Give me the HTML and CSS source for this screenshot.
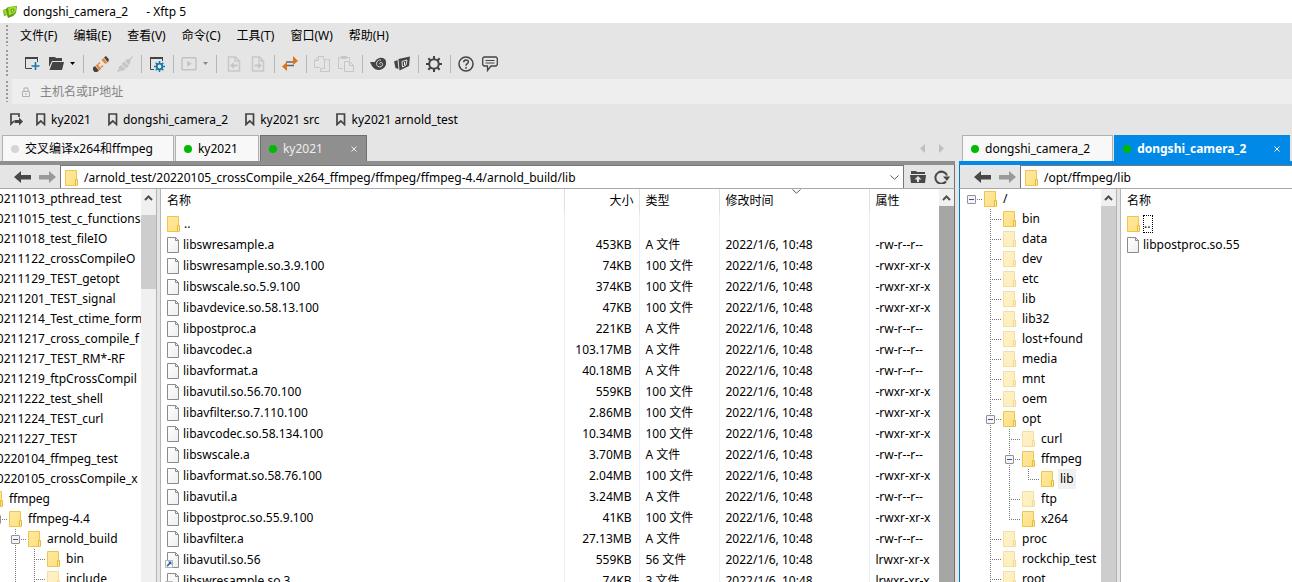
FILE: index.html
```html
<!DOCTYPE html>
<html lang="zh-CN">
<head>
<meta charset="utf-8">
<title>dongshi_camera_2 - Xftp 5</title>
<link rel="stylesheet" href="styles.css">
</head>
<body>
<svg class="defs" aria-hidden="true">
  <defs>
    <linearGradient id="folder-fill" x1="0" y1="0" x2="1" y2="1"><stop offset="0" stop-color="#ffe9a2"/><stop offset="1" stop-color="#ffdf7e"/></linearGradient>
    <linearGradient id="page-fill" x1="0" y1="0" x2="1" y2="1"><stop offset="0" stop-color="#fff"/><stop offset="1" stop-color="#eceef1"/></linearGradient>
  </defs>
  <symbol id="folder" viewBox="0 0 13 16"><path d="M.5.5h11v10.500h1v4.500H.5z" fill="url(#folder-fill)" stroke="#ebc750"/><path d="M10.500 15V9.500h2V15" fill="#ffe9a2" stroke="#e3bb3c"/></symbol>
  <symbol id="page" viewBox="0 0 12 16"><path d="M.5.5h8l3 3v12H.5z" fill="url(#page-fill)" stroke="#8b8b8b"/><path d="M8.500.5v3h3" fill="none" stroke="#8b8b8b"/></symbol>
  <symbol id="shortcut" viewBox="0 0 8 8"><path d="M.5.5h7v7h-7z" fill="#fff" stroke="#b5b5b5"/><path d="M3 1.500h3.500V5L5.300 3.900 2.500 6.700 1.500 5.500 4.200 2.800z" fill="#2360b5"/></symbol>
  <symbol id="back" viewBox="0 0 17 12"><path d="M0 6 7 0v4h10v4.500H7V12z"/></symbol>
  <symbol id="forward" viewBox="0 0 17 12"><path d="M17 6 10 0v4H0v4.500h10V12z"/></symbol>
  <symbol id="chevron-down" viewBox="0 0 9 5"><path d="M.5.5l4 3.700 4-3.700" fill="none" stroke="currentColor"/></symbol>
  <symbol id="chevron-up" viewBox="0 0 9 6"><path d="M1 5l3.500-3.500L8 5" fill="none" stroke="currentColor" stroke-width="2"/></symbol>
  <symbol id="close" viewBox="0 0 6 6"><path d="M.5.5l5 5M5.500.5l-5 5" stroke="currentColor"/></symbol>
  <symbol id="bookmark" viewBox="0 0 10 13"><path d="M1 1h7.500v10.500L4.800 8 1 11.500z" fill="none" stroke="currentColor" stroke-width="1.700"/></symbol>
</svg>

<header class="titlebar">
  <svg class="logo" viewBox="0 0 14 12"><path d="M0 4 3 3 5 1 14 0 13 7 10 10 5 12 4 9 1 10z" fill="#5a9b12"/><path d="M0 4 3 3.500 4.500 8.500 1.500 9z" fill="#9ad21f"/><path d="M5 1.500 13.500.5 12.300 6.500 6 9.500z" fill="#a6dc2d"/><path d="M8 3.500 11 3 10.500 5.500 8.300 6.300z" fill="#c9ee70" stroke="#4e8f10" stroke-width=".8"/></svg>
  <h1>dongshi_camera_2</h1><span>- Xftp 5</span>
</header>

<nav class="menu grip">
  <button>文件(F)</button><button>编辑(E)</button><button>查看(V)</button><button>命令(C)</button><button>工具(T)</button><button>窗口(W)</button><button>帮助(H)</button>
</nav>

<div class="toolbar grip">
  <button aria-label="新建"><svg viewBox="0 0 16 16"><path d="M8 12.500H1.500V2h12v4" fill="none" stroke="#444"/><path d="M1 1h13v2H1z"/><path d="M11.500 6v8M7.500 10h8" stroke="#1479a8" stroke-width="1.600"/></svg></button>
  <button aria-label="打开"><svg viewBox="0 0 16 16"><path d="M1 1h6l1 1h6v3H4L1 11z"/><path d="M4.500 6H16l-2 8H1.500z"/></svg></button>
  <button class="caret" aria-label="打开列表"><svg viewBox="0 0 5 3"><path d="M0 0h5L2.500 3z" fill="#000"/></svg></button>
  <i class="sep wide"></i>
  <button aria-label="连接"><svg viewBox="0 0 16 16"><path d="M11 1.500 13 0l3 3.500-1 3z"/><path d="M0 11.500 2 10l4 4.500L4 16H1.500L0 14z"/><path d="M8.500 4 10.500 2 14.300 6.700 12.300 8z" fill="#e8842c"/><path d="M2.700 9.500 4.300 8l4 4.800-1.800 1.500z" fill="#e8842c"/><path d="M5 8.500 7 6.500M8 11.500l2-2" stroke="#e8842c" stroke-width="1.200"/></svg></button>
  <button aria-label="断开" disabled><svg viewBox="0 0 16 16"><path d="M0 15l2-2-.5-2L4 9l4.500 4L6 15l-2-.5L1 16zM4.500 8 7 5.500l5 4.300L9 12.500zM8 5l2-2 2.500.2L15 0l1 1-2.700 3 .2 2-1.500 3z"/></svg></button>
  <i class="sep"></i>
  <button aria-label="属性"><svg viewBox="0 0 16 16"><path d="M5 13.500H1.500V2h12v3" fill="none" stroke="#444"/><path d="M1 1h13v2H1z"/><circle cx="10.500" cy="10.500" r="2.800" fill="none" stroke="#1479a8" stroke-width="1.800"/><path d="M10.500 5v3m0 5v3M5 10.500h3m5 0h3M6.700 6.700l1.800 1.800m4 4 1.800 1.800m0-7.600-1.800 1.800m-4 4-1.800 1.800" stroke="#1479a8" stroke-width="1.500"/></svg></button>
  <i class="sep"></i>
  <button aria-label="执行" disabled><svg viewBox="0 0 16 16"><rect x="1" y="1.700" width="14" height="12" rx="1" fill="none" stroke="#c3c3c3" stroke-width="1.500"/><path d="M6 4.700l5 3-5 3z"/></svg></button>
  <button class="caret" aria-label="执行列表"><svg viewBox="0 0 5 3"><path d="M0 0h5L2.500 3z" fill="#888"/></svg></button>
  <i class="sep wide"></i>
  <button aria-label="下载" disabled><svg viewBox="0 0 16 16"><path d="M2.500 1h7l4 4v10h-11zM9 1v4h4" fill="none" stroke="#c8c8c8" stroke-width="1.500"/><path d="M4 9.500 8 6v2.500h3.500v2H8V13z"/></svg></button>
  <button aria-label="上传" disabled><svg viewBox="0 0 16 16"><path d="M2.500 1h7l4 4v10h-11zM9 1v4h4" fill="none" stroke="#c8c8c8" stroke-width="1.500"/><path d="M12 9.500 8 6v2.500H4.500v2H8V13z"/></svg></button>
  <i class="sep"></i>
  <button aria-label="同步"><svg viewBox="0 0 16 16"><path d="M4 6h8M4 9.500h8" stroke="#666" stroke-width="1.500"/><path d="M11 0l5 5-5 4z" fill="#df7416"/><path d="M5 6 0 10.500 5 15z" fill="#df7416"/></svg></button>
  <i class="sep"></i>
  <button aria-label="复制" disabled><svg viewBox="0 0 16 16"><path d="M5.500 11.500h-5v-7l4-4h5v3M4.500.5v4h-4M13.500 3.500h2v12h-9v-3M13.500 3.500h-3v9h-4" fill="none" stroke="#c6c6c6"/></svg></button>
  <button aria-label="粘贴" disabled><svg viewBox="0 0 16 16"><path d="M5 12.500H.5v-11h11v3M3.500.5h5v2h-5zM6.500 5.500h5l4 4v6h-9zM11.500 5.500v4h4" fill="none" stroke="#c6c6c6"/></svg></button>
  <i class="sep"></i>
  <button aria-label="Xshell"><svg viewBox="0 0 16 16"><path d="M0 6l5 0c1-4 8-6 10.500-2 2 5-1 9.500-6.500 10-4 .3-7-3-9-8z"/><path d="M10.500 8.500c-2-1 0-3 1.500-1.500 2 2-1 5-4 3.500C5 8 7 3.500 11 4" fill="none" stroke="#ddd"/></svg></button>
  <button aria-label="Xftp"><svg viewBox="0 0 16 16"><path d="M0 5.500 3.500 4 4.500 13 1.500 12z"/><path d="M4.500 3 16 .5 15 10 5.500 14.500z"/><path d="M8 5.500 13 4 12 9 8.500 11z" fill="none" stroke="#e5e5e5"/><path d="M10.500 6v3" stroke="#eee"/></svg></button>
  <i class="sep"></i>
  <button aria-label="选项"><svg viewBox="0 0 16 16"><circle cx="8" cy="8" r="4.800" fill="none" stroke="#444" stroke-width="2"/><path d="M8 0v3m0 10v3M0 8h3m10 0h3M2.300 2.300l2.200 2.200m7 7 2.200 2.200m0-11.400-2.200 2.200m-7 7-2.200 2.200" stroke="#444" stroke-width="2"/></svg></button>
  <i class="sep"></i>
  <button aria-label="帮助"><svg viewBox="0 0 16 16"><circle cx="8" cy="8" r="7" fill="none" stroke="#444" stroke-width="1.500"/><path d="M5.700 6.300C5.700 3 10.500 3.300 10.400 6 10.300 7.600 8 7.800 8 9.800M8 11v1.800" fill="none" stroke="#444" stroke-width="1.500"/></svg></button>
  <button aria-label="反馈"><svg viewBox="0 0 16 16"><path d="M2 1h12l1.300 1.300v6.400L14 10H9l-3.500 4.500V10H2L.7 8.700V2.300z" fill="none" stroke="#444" stroke-width="1.300"/><path d="M3.500 4.500h9M3.500 7h9" stroke="#444"/></svg></button>
</div>

<div class="hostbar grip">
  <label class="host">
    <svg class="lock" viewBox="0 0 8 10"><path d="M2 4V1h4v3M.5 4.500h7v5h-7zM4 6v2" fill="none" stroke="#b0b0b0"/></svg>
    <input type="text" placeholder="主机名或IP地址" aria-label="主机名或IP地址">
  </label>
</div>

<div class="bookmarks">
  <button aria-label="添加书签"><svg class="mark-add" viewBox="0 0 13 13"><path d="M9 4V1H1v10l3-3" fill="none" stroke="currentColor" stroke-width="1.700"/><path d="M4.500 7H9V4.500l4 4L9 12.500V10H4.500z" fill="currentColor"/></svg></button>
  <button class="saved"><svg class="mark"><use href="#bookmark"/></svg>ky2021</button>
  <button class="saved"><svg class="mark"><use href="#bookmark"/></svg>dongshi_camera_2</button>
  <button class="saved"><svg class="mark"><use href="#bookmark"/></svg>ky2021 src</button>
  <button class="saved"><svg class="mark"><use href="#bookmark"/></svg>ky2021 arnold_test</button>
</div>

<main class="panes">
  <section class="pane local">
    <div class="tabs">
      <button class="tab"><i class="dot idle"></i>交叉编译x264和ffmpeg</button>
      <button class="tab"><i class="dot"></i>ky2021</button>
      <div class="tab active"><i class="dot"></i>ky2021<button class="close" aria-label="关闭"><svg><use href="#close"/></svg></button></div>
      <div class="tab-scroll"><button aria-label="向左"><svg viewBox="0 0 5 9"><path d="M5 0v9L0 4.500z"/></svg></button><button aria-label="向右"><svg viewBox="0 0 5 9"><path d="M0 0v9l5-4.500z"/></svg></button></div>
    </div>
    <div class="location">
      <button class="go" aria-label="后退"><svg><use href="#back"/></svg></button>
      <button class="go dim" aria-label="前进"><svg><use href="#forward"/></svg></button>
      <div class="path">
        <svg class="folder"><use href="#folder"/></svg>
        <input type="text" aria-label="路径" value="/arnold_test/20220105_crossCompile_x264_ffmpeg/ffmpeg/ffmpeg-4.4/arnold_build/lib">
        <button aria-label="展开"><svg class="chev"><use href="#chevron-down"/></svg></button>
      </div>
      <button class="act" aria-label="上级目录"><svg viewBox="0 0 16 14"><path d="M1 1h5l1 1h8v2H1zM0 5h16l-1 8H1z"/><path d="M8 6l3.500 3.500H9V12H7V9.500H4.500z" fill="#e5e5e5"/></svg></button>
      <button class="act" aria-label="刷新"><svg viewBox="0 0 16 14"><path d="M12 11.500A6 6 0 1 1 13 5.500" fill="none" stroke="#484848" stroke-width="2"/><path d="M9 6.500h7L13 11z"/></svg></button>
    </div>
    <div class="content">
      <div class="tree"><ul class="rows scrolled" id="tree-left"></ul></div>
      <div class="scrollbar"><button aria-label="向上"><svg><use href="#chevron-up"/></svg></button><i class="thumb short"></i></div>
      <i class="splitter"></i>
      <div class="list">
        <table>
          <colgroup><col><col class="c-size"><col class="c-type"><col class="c-time"><col class="c-attr"></colgroup>
          <thead><tr><th>名称</th><th class="num">大小</th><th>类型</th><th class="sorted">修改时间<svg class="chev"><use href="#chevron-down"/></svg></th><th>属性</th></tr></thead>
          <tbody id="files-left"></tbody>
        </table>
      </div>
      <div class="scrollbar dark"><button aria-label="向上"><svg><use href="#chevron-up"/></svg></button><i class="thumb"></i></div>
    </div>
  </section>

  <section class="pane current">
    <div class="tabs">
      <button class="tab"><i class="dot"></i>dongshi_camera_2</button>
      <div class="tab active"><i class="dot"></i>dongshi_camera_2<button class="close" aria-label="关闭"><svg><use href="#close"/></svg></button></div>
    </div>
    <div class="location">
      <button class="go" aria-label="后退"><svg><use href="#back"/></svg></button>
      <button class="go dim" aria-label="前进"><svg><use href="#forward"/></svg></button>
      <div class="path">
        <svg class="folder"><use href="#folder"/></svg>
        <input type="text" aria-label="路径" value="/opt/ffmpeg/lib">
      </div>
    </div>
    <div class="content">
      <div class="tree"><ul class="rows" id="tree-right"></ul></div>
      <div class="scrollbar"><button aria-label="向上"><svg><use href="#chevron-up"/></svg></button><i class="thumb"></i></div>
      <i class="splitter"></i>
      <div class="list">
        <table>
          <thead><tr><th>名称</th></tr></thead>
          <tbody id="files-right"></tbody>
        </table>
      </div>
    </div>
  </section>
</main>
<script src="app.js"></script>
</body>
</html>
```

FILE: styles.css
```css
* { box-sizing: border-box; }

body {
  display: flex;
  flex-direction: column;
  height: 100vh;
  margin: 0;
  overflow: hidden;
  background: #e5e5e5;
  color: #000;
  font: 12px/20px "Noto Sans", "Noto Sans CJK SC", sans-serif;
}

button, input { border: 0; padding: 0; background: none; color: inherit; font: inherit; outline: 0; }
svg { display: block; flex: none; }
ul { list-style: none; margin: 0; padding: 0; }
.defs { position: absolute; width: 0; height: 0; }

.titlebar { display: flex; align-items: center; flex: none; height: 23px; padding-left: 3px; background: #fff; }
.titlebar h1 { margin: 0 18px 0 6px; font: inherit; }
.logo { width: 14px; height: 12px; }

.grip { position: relative; padding-left: 20px; }
.grip::before {
  content: "";
  position: absolute;
  left: 6px;
  top: 2px;
  bottom: 2px;
  width: 2px;
  background: repeating-linear-gradient(#999 0 2px, transparent 2px 4px);
}

.menu { display: flex; align-items: center; gap: 16px; flex: none; height: 25px; }

.toolbar { display: flex; align-items: center; flex: none; height: 31px; fill: #444; }
.toolbar button { width: 24px; height: 24px; padding: 4px; }
.toolbar button:disabled { fill: #c6c6c6; }
.toolbar button > svg { width: 16px; height: 16px; }
.toolbar .caret { width: 9px; padding: 2px; }
.toolbar .caret > svg { width: 5px; height: 3px; }
.sep { width: 8px; height: 18px; background: linear-gradient(#b5b5b5, #b5b5b5) center / 1px 100% no-repeat; }
.sep.wide { width: 12px; }

.hostbar { flex: none; height: 25px; padding-left: 12px; }
.host { display: flex; align-items: center; height: 25px; padding-left: 10px; background: #eee; }
.lock { width: 8px; height: 10px; margin-right: 10px; }
.host input { flex: 1; }
.host input::placeholder { color: #858585; opacity: 1; }

.bookmarks { display: flex; align-items: center; gap: 13px; flex: none; height: 31px; padding-left: 10px; }
.bookmarks button { display: flex; align-items: center; gap: 5px; }
.bookmarks .saved { padding-right: 4px; }
.mark { width: 10px; height: 13px; color: #444; }
.mark-add { width: 13px; height: 13px; color: #444; }

.panes { display: grid; grid-template-columns: minmax(0, 1fr) 333px; gap: 4px; flex: 1; min-height: 0; }
.pane { --accent: #8f8f8f; --edge: #707070; display: flex; flex-direction: column; min-width: 0; min-height: 0; }
.current { --accent: #0089e6; --edge: #0078cc; }

.tabs { display: flex; flex: none; gap: 1px; height: 30px; padding-left: 2px; border-bottom: 4px solid var(--accent); }
.current .tabs { padding-left: 3px; }
.tab {
  display: flex;
  align-items: center;
  gap: 6px;
  height: 26px;
  padding: 1px 20px 0 8px;
  border: 1px solid #b0b0b0;
  border-bottom: 0;
  background: #f8f8f8;
}
.current .tab { padding-right: 22px; }
.tab.active { border-color: var(--edge); background: var(--accent); color: #eee; }
.pane .tab.active { padding-right: 8px; }
.current .tab.active { border-color: var(--accent); color: #fff; font-weight: bold; }
.dot { width: 8px; height: 8px; border-radius: 50%; background: #0b0; }
.dot.idle { background: #d5d5d5; }
.close { width: 8px; margin-left: 21px; padding: 1px; }
.close svg { width: 6px; height: 6px; }
.tab-scroll { display: flex; gap: 14px; margin: 0 11px 0 auto; fill: #c0c0c0; }
.tab-scroll svg { width: 5px; height: 9px; }

.location { display: flex; align-items: center; flex: none; height: 24px; padding-left: 10px; border-bottom: 1px solid #a8a8a8; }
.current .location, .current .content { border-left: 1px solid #0078cc; }
.local .location, .local .content { border-right: 1px solid #707070; }
.go { padding: 0 4px; fill: #484848; }
.go.dim { fill: #999; }
.go svg { width: 17px; height: 12px; }
.path { display: flex; align-items: center; flex: 1; align-self: stretch; margin-right: 2px; padding: 1px 4px 0; border: 1px solid #777; border-bottom: 0; background: #fff; }
.current .path { margin-right: 0; border-right: 0; }
.path input { flex: 1; min-width: 0; padding: 0 6px; }
.chev { width: 9px; height: 5px; color: #555; }
.act { padding: 0 4px; fill: #484848; }
.act svg { width: 16px; height: 14px; }

.content { display: flex; flex: 1; min-height: 0; background: #fff; }
.tree { flex: none; width: 141px; overflow: hidden; }
.rows { padding-left: 2px; }
.rows.scrolled { margin-left: -53px; }
.rows li { display: flex; align-items: center; height: 20px; white-space: nowrap; }
.folder { width: 13px; height: 16px; }
.faint { opacity: .55; }
.rows .folder { margin: 0 4px 0 3px; }
.rows span { padding: 0 2px; }
.rows .selected { background: #f0f0f0; }

.cell { position: relative; flex: none; width: 19px; height: 20px; }
.v::before, .t::before, .l::before, .b::before {
  content: "";
  position: absolute;
  left: 9px;
  top: 0;
  width: 1px;
  height: 20px;
  background: repeating-linear-gradient(#777 0 1px, transparent 1px 2px);
}
.l::before, .e::before { height: 10px; }
.t::after, .l::after, .b::after, .r::after {
  content: "";
  position: absolute;
  left: 9px;
  top: 10px;
  width: 12px;
  height: 1px;
  background: repeating-linear-gradient(90deg, #777 0 1px, transparent 1px 2px);
}
.toggle { position: absolute; z-index: 1; left: 5px; top: 6px; width: 9px; height: 9px; border: 1px solid #919191; border-radius: 1px; background: linear-gradient(#35559f, #35559f) center / 5px 1px no-repeat #f5f5f5; }

.scrollbar { display: flex; flex-direction: column; flex: none; width: 15px; background: #f0f0f0; color: #505050; }
.scrollbar button { flex: none; height: 17px; padding: 5px 3px; }
.scrollbar svg { width: 9px; height: 6px; }
.thumb { flex: 1; background: #cdcdcd; }
.thumb.short { flex: none; height: 74px; margin-top: 9px; }
.dark .thumb { background: #a6a6a6; }
.splitter { flex: none; width: 5px; border: solid #b5b5b5; border-width: 0 1px; background: #e5e5e5; }

.list { flex: 1; min-width: 0; overflow: hidden; }
table { width: 100%; border-collapse: collapse; table-layout: fixed; }
.c-size { width: 75px; }
.c-type { width: 80px; }
.c-time { width: 150px; }
.c-attr { width: 70px; }
th, td { height: 21px; padding: 0 0 0 6px; border-left: 1px solid #e9f0f8; text-align: left; font-weight: normal; line-height: 20px; white-space: nowrap; }
th { height: 24px; border-color: #e0e0e0; }
th:first-child, td:first-child { border-left: 0; }
th.num { padding-right: 5px; text-align: right; }
td.num { padding-right: 7px; text-align: right; }
.sorted { position: relative; }
.sorted .chev { position: absolute; left: 72px; top: 0; }
.name { display: flex; align-items: center; gap: 4px; height: 21px; }
.icon { position: relative; }
.page { width: 12px; height: 16px; }
.shortcut { position: absolute; left: -2px; bottom: 0; width: 8px; height: 8px; }
.focused { padding-right: 2px; outline: 1px dotted #000; line-height: 16px; }
```

FILE: app.js
```js
// Tree rows: [guide cells, label, folder state]. Cells: t tee, l elbow, v line, b toggle, e last toggle, r root toggle.
const leftTree = [
  ["t", "20211013_pthread_test"], ["t", "20211015_test_c_functions"], ["t", "20211018_test_fileIO"],
  ["t", "20211122_crossCompileO"], ["t", "20211129_TEST_getopt"], ["t", "20211201_TEST_signal"],
  ["t", "20211214_Test_ctime_form"], ["t", "20211217_cross_compile_f"], ["t", "20211217_TEST_RM*-RF"],
  ["t", "20211219_ftpCrossCompil"], ["t", "20211222_test_shell"], ["t", "20211224_TEST_curl"],
  ["t", "20211227_TEST"], ["t", "20220104_ffmpeg_test"], ["b", "20220105_crossCompile_x"],
  ["vb", "ffmpeg"], ["v.e", "ffmpeg-4.4"], ["v..b", "arnold_build"], ["v..vt", "bin"], ["v..vt", "include", "faint"],
];
const rightTree = [
  ["r", "/"], [".t", "bin"], [".t", "data", "faint"], [".t", "dev", "faint"], [".t", "etc", "faint"],
  [".t", "lib", "faint"], [".t", "lib32", "faint"], [".t", "lost+found", "faint"], [".t", "media", "faint"],
  [".t", "mnt", "faint"], [".t", "oem", "faint"], [".b", "opt"], [".vt", "curl", "faint"], [".vb", "ffmpeg"],
  [".vvl", "lib", "selected"], [".vt", "ftp", "faint"], [".vl", "x264"], [".t", "proc", "faint"],
  [".t", "rockchip_test", "faint"], [".t", "root", "faint"],
];
const cellClass = { e: "b e", ".": "" };

function renderTree(id, rows) {
  document.getElementById(id).innerHTML = rows.map(([cells, label, state = ""]) => {
    const guides = [...cells].map(c =>
      `<i class="cell ${cellClass[c] ?? c}">${"ber".includes(c) ? '<button class="toggle" aria-label="折叠"></button>' : ""}</i>`).join("");
    return `<li>${guides}<svg class="folder ${state === "faint" ? "faint" : ""}"><use href="#folder"/></svg><span class="${state === "selected" ? "selected" : ""}">${label}</span></li>`;
  }).join("");
}

const RW = "-rw-r--r--", RX = "-rwxr-xr-x", LINK = "lrwxr-xr-x", TIME = "2022/1/6, 10:48";
const files = [
  ["libswresample.a", "453KB", "A 文件", RW], ["libswresample.so.3.9.100", "74KB", "100 文件", RX],
  ["libswscale.so.5.9.100", "374KB", "100 文件", RX], ["libavdevice.so.58.13.100", "47KB", "100 文件", RX],
  ["libpostproc.a", "221KB", "A 文件", RW], ["libavcodec.a", "103.17MB", "A 文件", RW],
  ["libavformat.a", "40.18MB", "A 文件", RW], ["libavutil.so.56.70.100", "559KB", "100 文件", RX],
  ["libavfilter.so.7.110.100", "2.86MB", "100 文件", RX], ["libavcodec.so.58.134.100", "10.34MB", "100 文件", RX],
  ["libswscale.a", "3.70MB", "A 文件", RW], ["libavformat.so.58.76.100", "2.04MB", "100 文件", RX],
  ["libavutil.a", "3.24MB", "A 文件", RW], ["libpostproc.so.55.9.100", "41KB", "100 文件", RX],
  ["libavfilter.a", "27.13MB", "A 文件", RW], ["libavutil.so.56", "559KB", "56 文件", LINK],
  ["libswresample.so.3", "74KB", "3 文件", LINK],
];
const nameCell = (name, kind, link, focused) =>
  `<td><div class="name"><span class="icon"><svg class="${kind}"><use href="#${kind}"/></svg>${link ? '<svg class="shortcut"><use href="#shortcut"/></svg>' : ""}</span><span class="${focused ? "focused" : ""}">${name}</span></div></td>`;

renderTree("tree-left", leftTree);
renderTree("tree-right", rightTree);
document.getElementById("files-left").innerHTML =
  `<tr>${nameCell("..", "folder")}<td></td><td></td><td></td><td></td></tr>` +
  files.map(([name, size, type, attr]) =>
    `<tr>${nameCell(name, "page", attr === LINK)}<td class="num">${size}</td><td>${type}</td><td>${TIME}</td><td>${attr}</td></tr>`).join("");
document.getElementById("files-right").innerHTML =
  `<tr>${nameCell("..", "folder", false, true)}</tr><tr>${nameCell("libpostproc.so.55", "page")}</tr>`;
```
